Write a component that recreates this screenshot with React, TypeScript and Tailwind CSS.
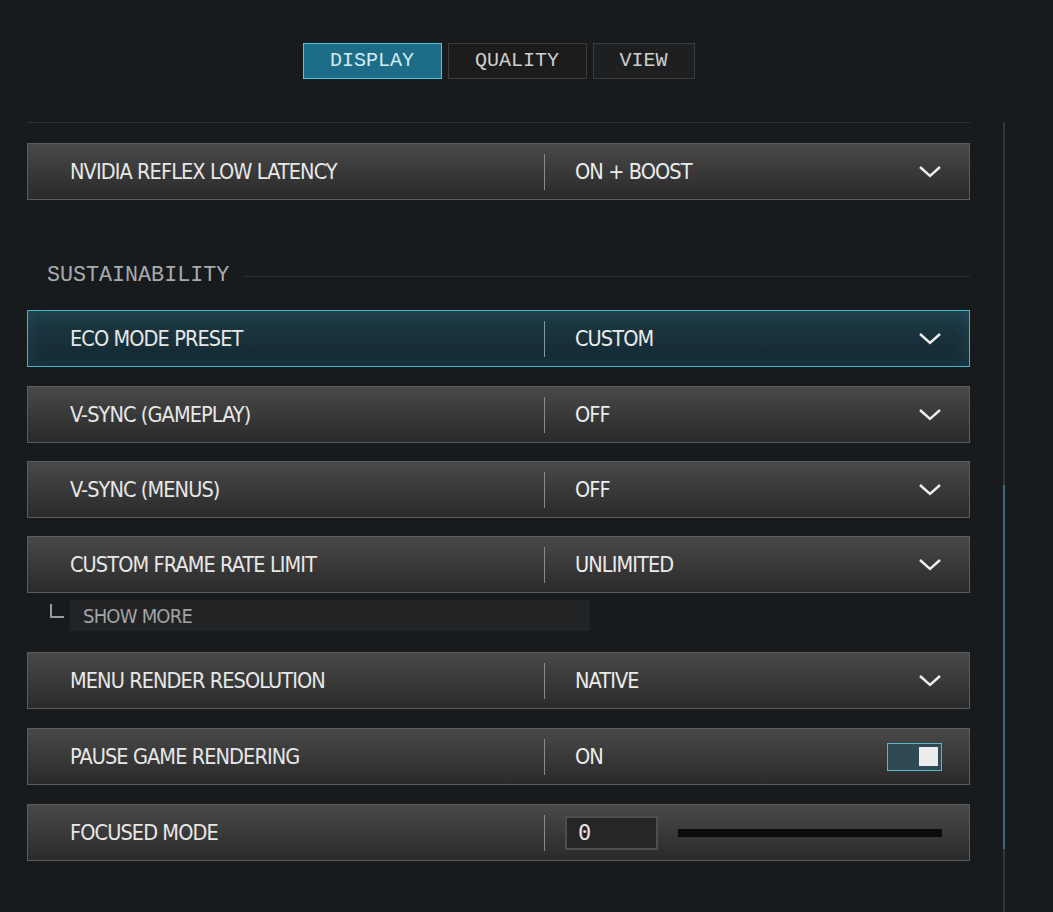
import React from 'react'

const cond = "font-['Liberation_Sans_Narrow','DejaVu_Sans_Condensed',sans-serif]"
const mono = "font-['Liberation_Mono','DejaVu_Sans_Mono',monospace]"

function Chevron() {
  return (
    <svg width="24" height="14" viewBox="0 0 24 14" fill="none">
      <polyline points="2,2 12,11 22,2" stroke="#f0f0f0" strokeWidth="2.4" />
    </svg>
  )
}

function Row({
  label,
  value,
  active = false,
  right,
}: {
  label: string
  value?: string
  active?: boolean
  right?: React.ReactNode
}) {
  return (
    <div
      className={
        'flex items-center h-[57px] border ' +
        (active
          ? 'border-[#42b6cb] bg-gradient-to-b from-[#1d3a45] to-[#142832] shadow-[inset_0_0_18px_rgba(66,182,203,0.15)]'
          : 'border-[#5c5c5c] bg-gradient-to-b from-[#494949] to-[#2a2a2a]')
      }
    >
      <div className={`w-[516px] pl-[42px] pt-px text-[21.5px] text-[#e8e8e8] tracking-[-0.9px] ${cond}`}>{label}</div>
      <div className={'w-px h-[36px] ' + (active ? 'bg-[#7f9aa2]' : 'bg-[#8a8a8a]')} />
      <div className="flex-1 flex items-center pr-[27px]">
        {value !== undefined && (
          <div className={`flex-1 pl-[30px] pt-px text-[21.5px] text-[#ececec] tracking-[-0.9px] ${cond}`}>{value}</div>
        )}
        {right ?? <Chevron />}
      </div>
    </div>
  )
}

export default function App() {
  return (
    <div className="relative flex w-[1053px] h-[912px] overflow-hidden bg-[#181b1e]">
      <div className="ml-[27px] w-[943px] flex flex-col">
        {/* Tabs */}
        <div className="mt-[43px] flex justify-center gap-[6px]">
          <div className={`w-[139px] h-[36px] flex items-center justify-center border border-[#5ec3da] bg-[#1e6d88] text-[20px] text-[#d3ecf3] ${mono}`}>
            DISPLAY
          </div>
          <div className={`w-[139px] h-[36px] flex items-center justify-center border border-[#3b3b3b] bg-[#1c1c1d] text-[20px] text-[#cfcfcf] ${mono}`}>
            QUALITY
          </div>
          <div className={`w-[102px] h-[36px] flex items-center justify-center border border-[#3b3b3b] bg-[#1e1f20] text-[20px] text-[#cfcfcf] ${mono}`}>
            VIEW
          </div>
        </div>

        <div className="mt-[43px] h-px bg-[#2e3235]" />

        <div className="mt-[20px]">
          <Row label="NVIDIA REFLEX LOW LATENCY" value="ON + BOOST" />
        </div>

        <div className="mt-[62px] h-[28px] flex items-center pl-[20px]">
          <span className={`text-[21.7px] text-[#a9abad] ${mono}`}>SUSTAINABILITY</span>
          <div className="flex-1 ml-[15px] h-px bg-[#2c3033]" />
        </div>

        <div className="mt-[20px] flex flex-col gap-[18px]">
          <div className="mb-px">
            <Row label="ECO MODE PRESET" value="CUSTOM" active />
          </div>
          <Row label="V-SYNC (GAMEPLAY)" value="OFF" />
          <Row label="V-SYNC (MENUS)" value="OFF" />
          <Row label="CUSTOM FRAME RATE LIMIT" value="UNLIMITED" />
        </div>

        <div className="mt-[7px] h-[31px] flex items-center">
          <div className="ml-[23px] w-[14px] h-[14px] mb-[10px] border-l-2 border-b-2 border-[#9a9c9e]" />
          <div className={`ml-[6px] w-[520px] h-full flex items-center pl-[13px] bg-[#212325] text-[20px] text-[#a3a5a7] tracking-[-0.8px] ${cond}`}>
            SHOW MORE
          </div>
        </div>

        <div className="mt-[21px] flex flex-col gap-[19px]">
          <Row label="MENU RENDER RESOLUTION" value="NATIVE" />
          <Row
            label="PAUSE GAME RENDERING"
            value="ON"
            right={
              <div className="w-[55px] h-[28px] border border-[#55b9c9] bg-[#2f4a55] flex items-center justify-end pr-[3px]">
                <div className="w-[19px] h-[19px] bg-[#ececec]" />
              </div>
            }
          />
          <Row
            label="FOCUSED MODE"
            right={
              <div className="flex-1 flex items-center pl-[20px]">
                <div className="w-[93px] h-[34px] border-2 border-[#4e4e4e] bg-[#262626] flex items-center pl-[11px] text-[22px] text-[#e6e6e6] font-['DejaVu_Sans_Mono',monospace]">
                  0
                </div>
                <div className="ml-[20px] flex-1 h-[8px] bg-[#0c0c0c]" />
              </div>
            }
          />
        </div>
      </div>

      {/* Scrollbar */}
      <div className="ml-[33px] mt-[122px] w-[2px] bg-[#30363a] flex flex-col">
        <div className="mt-[363px] h-[364px] bg-[#3a6c75]" />
      </div>
    </div>
  )
}
